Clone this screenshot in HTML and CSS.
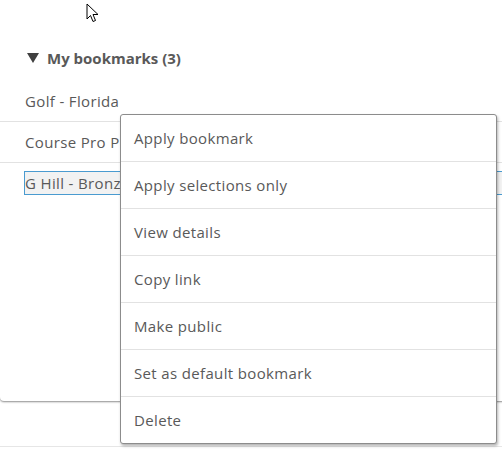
FILE: index.html
```html
<!DOCTYPE html>
<html>
<head>
<meta charset="utf-8">
<link rel="stylesheet" href="styles.css">
</head>
<body>
<div class="page">
  <div class="panel">
    <div class="header">
      <svg class="caret" width="12" height="10" viewBox="0 0 12 10"><polygon points="0,0 12,0 6,10" fill="#404040"/></svg>
      <span class="title">My bookmarks (3)</span>
    </div>
    <ul class="list">
      <li class="row"><span class="label">Golf - Florida</span></li>
      <li class="row"><span class="label">Course Pro Purchases</span></li>
      <li class="row last"><span class="label selected">G Hill - Bronze</span></li>
    </ul>
  </div>
  <div class="below"></div>

  <ul class="menu">
    <li class="item">Apply bookmark</li>
    <li class="item">Apply selections only</li>
    <li class="item">View details</li>
    <li class="item">Copy link</li>
    <li class="item">Make public</li>
    <li class="item">Set as default bookmark</li>
    <li class="item">Delete</li>
  </ul>

  <svg class="cursor" width="13" height="20" viewBox="0 0 13 20">
    <path d="M1 1 L1 16 L4.5 12.5 L7 18.5 L9.5 17.5 L7 11.5 L12 11.5 Z" fill="#fff" stroke="#000" stroke-width="1" stroke-linejoin="miter"/>
  </svg>
</div>
</body>
</html>
```

FILE: styles.css
```css
* { box-sizing: border-box; }
html, body { margin: 0; padding: 0; background: #fff; }
body {
  font-family: "Open Sans", "Noto Sans", sans-serif;
  color: #595959;
  overflow: hidden;
}
.page {
  position: relative;
  width: 502px;
  height: 449px;
  overflow: hidden;
}
.panel {
  width: 520px;
  height: 401px;
  background: #fff;
  border-bottom-left-radius: 4px;
  box-shadow: 0 1px 2px rgba(0,0,0,0.45);
  padding-top: 45px;
  position: relative;
  z-index: 2;
}
.header {
  display: flex;
  align-items: center;
  height: 25px;
  padding-left: 27px;
  gap: 8px;
}
.caret { display: block; }
.title {
  font-weight: 700;
  font-size: 15px;
  color: #595959;
}
.list {
  list-style: none;
  margin: 11px 0 0;
  padding: 0;
}
.row {
  height: 41px;
  border-bottom: 1px solid #e2e2e2;
  padding: 8px 0 0 24px;
  font-size: 15px;
  letter-spacing: 0.35px;
}
.row.last { border-bottom: none; }
.label {
  display: block;
  height: 24px;
  line-height: 22px;
  border: 1px solid transparent;
  white-space: nowrap;
}
.label.selected {
  background: #f2f2f2;
  border-color: #4a9bd0;
}
.below {
  height: 46px;
  border-bottom: 1px solid #e6e6e6;
}
.menu {
  position: absolute;
  left: 120px;
  top: 114px;
  width: 377px;
  margin: 0;
  padding: 0;
  list-style: none;
  background: #fff;
  border: 1px solid #8c8c8c;
  border-radius: 3px;
  box-shadow: 1px 2px 3px rgba(0,0,0,0.3);
  z-index: 5;
}
.item {
  height: 47px;
  line-height: 46px;
  padding-left: 13px;
  font-size: 15px;
  letter-spacing: 0.35px;
  color: #595959;
  border-bottom: 1px solid #e2e2e2;
}
.item:last-child {
  border-bottom: none;
  height: 46px;
}
.cursor {
  position: absolute;
  left: 86px;
  top: 3px;
  z-index: 10;
}
```
